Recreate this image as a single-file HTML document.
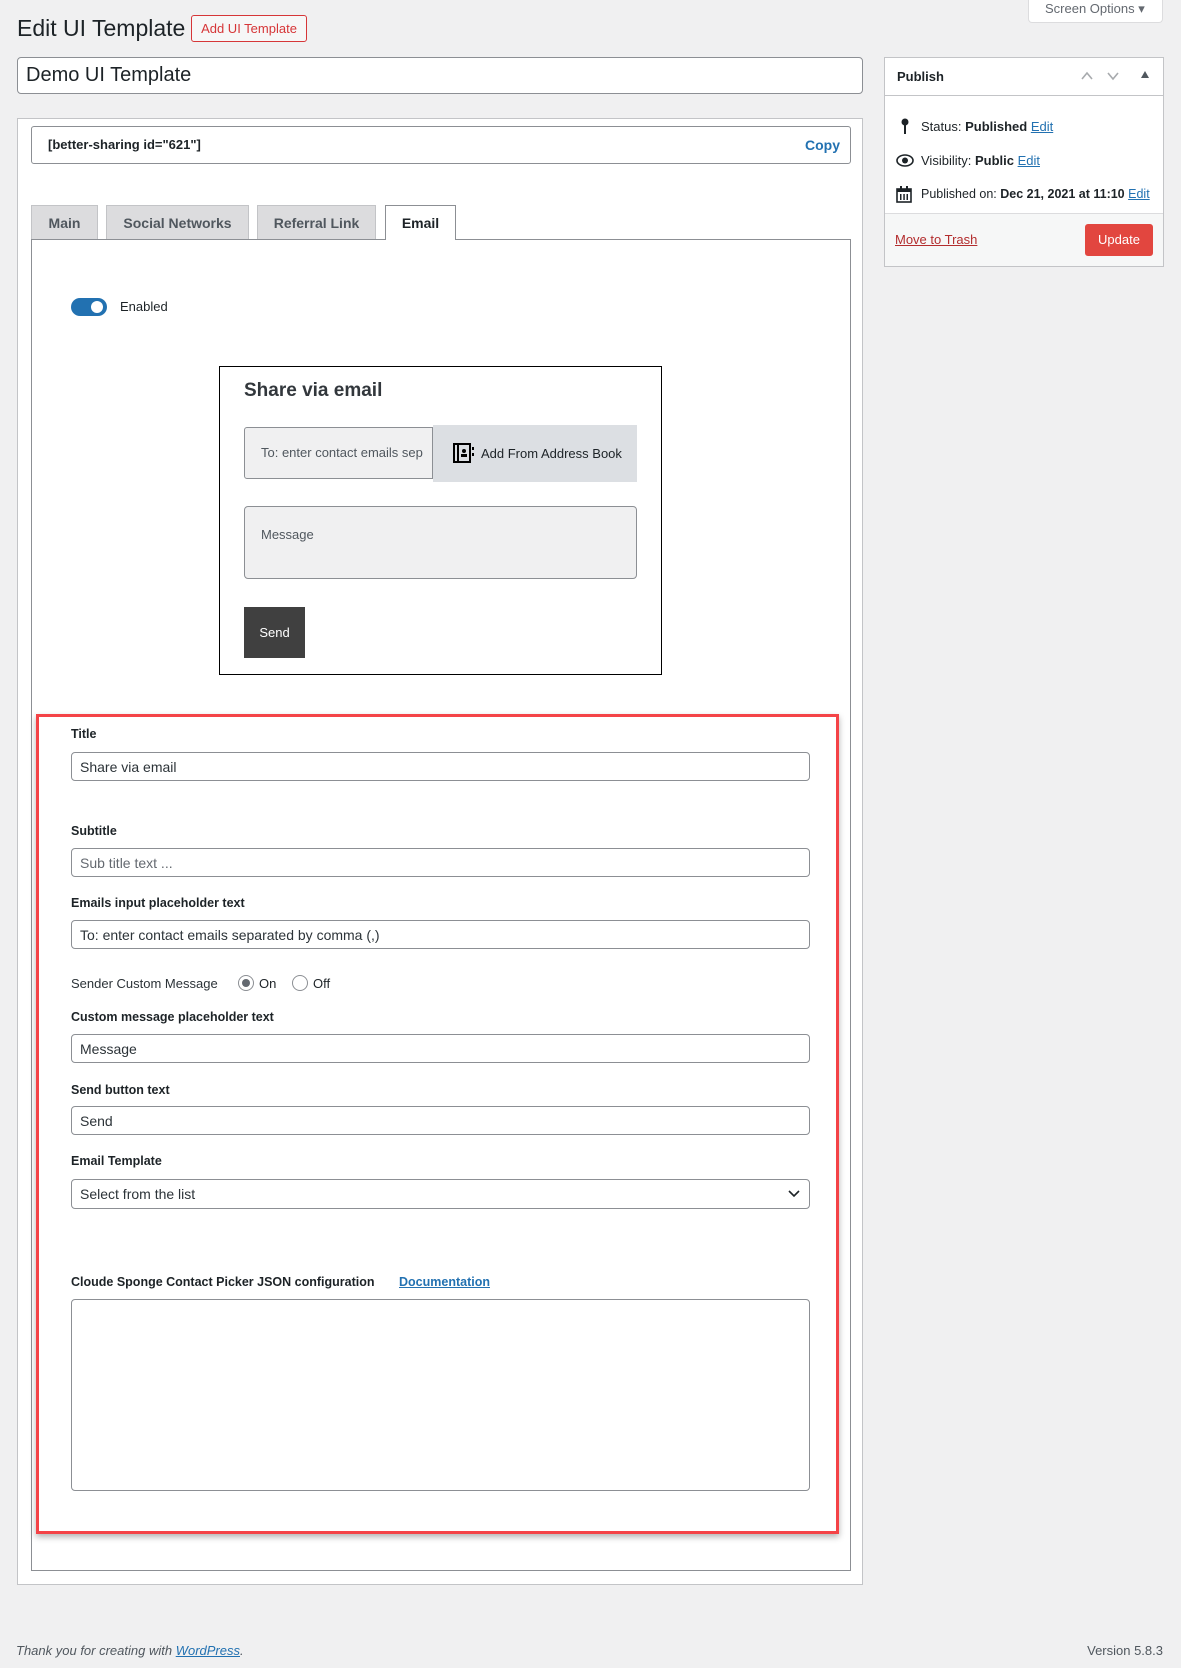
<!DOCTYPE html>
<html><head><meta charset="utf-8">
<style>
*{box-sizing:border-box;margin:0;padding:0}
body{width:1181px;height:1668px;background:#f0f0f1;font-family:"Liberation Sans",sans-serif;color:#1d2327;font-size:13px;position:relative;overflow:hidden}
.a{position:absolute}
.lbl{position:absolute;left:71px;font-weight:bold;font-size:12.5px;color:#1d2327}
.inp{position:absolute;left:71px;width:739px;height:29px;border:1px solid #8c8f94;border-radius:4px;background:#fff;font-size:14px;padding:6px 8px;color:#2c3338}
a{color:#2271b1;text-decoration:underline}
</style></head><body>
<div class="a" style="left:17px;top:15px;font-size:23px;">Edit UI Template</div>
<div class="a" style="left:191px;top:15px;width:116px;height:27px;border:1px solid #d63638;border-radius:3px;color:#d63638;font-size:13px;line-height:25px;text-align:center;background:#f6f7f7">Add UI Template</div>
<div class="a" style="left:1028px;top:-2px;width:135px;height:25px;border:1px solid #dcdcde;border-top:none;background:#fff;border-radius:0 0 4px 4px;font-size:13px;color:#646970;line-height:22px;padding-left:16px">Screen Options ▾</div>

<div class="a" style="left:17px;top:57px;width:846px;height:37px;border:1px solid #8c8f94;border-radius:4px;background:#fff;font-size:20px;padding:4px 8px;line-height:27px">Demo UI Template</div>

<div class="a" style="left:17px;top:118px;width:846px;height:1467px;border:1px solid #c3c4c7;background:#fff"></div>
<div class="a" style="left:31px;top:126px;width:820px;height:38px;border:1px solid #8c8f94;border-radius:3px;background:#fff;font-weight:bold;font-size:13px;line-height:36px;padding-left:16px">[better-sharing id="621"]<span style="position:absolute;right:10px;color:#2271b1;font-size:14px">Copy</span></div>

<div class="a" style="left:31px;top:239px;width:820px;height:1332px;border:1px solid #8c8f94;background:#fff"></div>
<div class="a" style="left:31px;top:205px;width:67px;height:34px;border:1px solid #c3c4c7;border-bottom:none;background:#dcdcde;font-weight:bold;font-size:14px;line-height:34px;text-align:center;color:#50575e">Main</div>
<div class="a" style="left:106px;top:205px;width:143px;height:34px;border:1px solid #c3c4c7;border-bottom:none;background:#dcdcde;font-weight:bold;font-size:14px;line-height:34px;text-align:center;color:#50575e">Social Networks</div>
<div class="a" style="left:257px;top:205px;width:119px;height:34px;border:1px solid #c3c4c7;border-bottom:none;background:#dcdcde;font-weight:bold;font-size:14px;line-height:34px;text-align:center;color:#50575e">Referral Link</div>
<div class="a" style="left:385px;top:205px;width:71px;height:35px;border:1px solid #8c8f94;border-bottom:none;background:#fff;font-weight:bold;font-size:14px;line-height:34px;text-align:center">Email</div>

<div class="a" style="left:71px;top:298px;width:36px;height:18px;border-radius:9px;background:#2271b1"></div>
<div class="a" style="left:91px;top:301px;width:12px;height:12px;border-radius:6px;background:#fff"></div>
<div class="a" style="left:120px;top:299px;font-size:13px">Enabled</div>

<div class="a" style="left:219px;top:366px;width:443px;height:309px;border:1px solid #000;background:#fff"></div>
<div class="a" style="left:244px;top:380px;font-size:19px;color:#32373c;font-weight:600">Share via email</div>
<div class="a" style="left:244px;top:427px;width:189px;height:52px;border:1px solid #8c8f94;border-radius:3px 0 0 3px;background:#f0f0f1;font-size:13px;color:#50575e;padding:17px 16px;white-space:nowrap;overflow:hidden">To: enter contact emails sep</div>
<div class="a" style="left:433px;top:425px;width:204px;height:57px;background:#dcdfe3;font-size:13px;color:#1d2327;line-height:57px;padding-left:48px">Add From Address Book</div>
<svg class="a" style="left:453px;top:443px" width="22" height="20" viewBox="0 0 22 20"><rect x="1" y="1" width="16" height="18" fill="none" stroke="#000" stroke-width="2"/><line x1="5" y1="1" x2="5" y2="19" stroke="#000" stroke-width="2"/><circle cx="11" cy="8" r="2" fill="#000"/><rect x="8" y="11" width="6" height="3" fill="#000"/><rect x="19" y="4" width="2" height="3" fill="#000"/><rect x="19" y="10" width="2" height="3" fill="#000"/></svg>
<div class="a" style="left:244px;top:506px;width:393px;height:73px;border:1px solid #8c8f94;border-radius:4px;background:#f0f0f1;font-size:13px;color:#50575e;padding:20px 16px">Message</div>
<div class="a" style="left:244px;top:607px;width:61px;height:51px;background:#404040;color:#fff;font-size:13px;line-height:51px;text-align:center">Send</div>

<div class="a" style="left:36px;top:714px;width:803px;height:820px;border:3px solid #f44347;box-shadow:0 3px 6px rgba(0,0,0,.3)"></div>
<div class="lbl" style="top:727px">Title</div>
<div class="inp" style="top:752px">Share via email</div>
<div class="lbl" style="top:824px">Subtitle</div>
<div class="inp" style="top:848px;color:#646970">Sub title text ...</div>
<div class="lbl" style="top:896px">Emails input placeholder text</div>
<div class="inp" style="top:920px">To: enter contact emails separated by comma (,)</div>
<div class="a" style="left:71px;top:976px;font-size:13px;color:#2c3338">Sender Custom Message</div>
<div class="a" style="left:238px;top:975px;width:16px;height:16px;border:1px solid #8c8f94;border-radius:50%;background:#fff"></div>
<div class="a" style="left:242px;top:979px;width:8px;height:8px;border-radius:50%;background:#646970"></div>
<div class="a" style="left:259px;top:976px;font-size:13px">On</div>
<div class="a" style="left:292px;top:975px;width:16px;height:16px;border:1px solid #8c8f94;border-radius:50%;background:#fff"></div>
<div class="a" style="left:313px;top:976px;font-size:13px">Off</div>
<div class="lbl" style="top:1010px">Custom message placeholder text</div>
<div class="inp" style="top:1034px">Message</div>
<div class="lbl" style="top:1083px">Send button text</div>
<div class="inp" style="top:1106px">Send</div>
<div class="lbl" style="top:1154px">Email Template</div>
<div class="inp" style="top:1179px;height:30px">Select from the list
<svg style="position:absolute;right:9px;top:10px" width="12" height="8" viewBox="0 0 12 8"><path d="M1 1l5 5 5-5" fill="none" stroke="#1d2327" stroke-width="1.6"/></svg></div>
<div class="lbl" style="top:1275px">Cloude Sponge Contact Picker JSON configuration</div>
<div class="a" style="left:399px;top:1275px;font-weight:bold;font-size:12.5px"><a>Documentation</a></div>
<div class="inp" style="top:1299px;height:192px"></div>

<div class="a" style="left:884px;top:57px;width:280px;height:210px;border:1px solid #c3c4c7;background:#fff"></div>
<div class="a" style="left:884px;top:95px;width:280px;height:1px;background:#c3c4c7"></div>
<div class="a" style="left:897px;top:69px;font-weight:bold;font-size:13px">Publish</div>
<svg class="a" style="left:1081px;top:71px" width="44" height="10" viewBox="0 0 44 10"><path d="M1 8l5-6 5 6" fill="none" stroke="#a7aaad" stroke-width="1.6"/><path d="M27 2l5 6 5-6" fill="none" stroke="#a7aaad" stroke-width="1.6"/></svg>
<svg class="a" style="left:1141px;top:71px" width="8" height="7" viewBox="0 0 8 7"><path d="M0 7L4 0 8 7z" fill="#50575e"/></svg>
<svg class="a" style="left:900px;top:118px" width="10" height="16" viewBox="0 0 10 16"><circle cx="5" cy="4" r="3.5" fill="#1d2327"/><rect x="4" y="6" width="2" height="10" fill="#1d2327"/></svg>
<div class="a" style="left:921px;top:119px">Status: <b style="font-weight:600">Published</b> <a>Edit</a></div>
<svg class="a" style="left:896px;top:154px" width="18" height="13" viewBox="0 0 18 13"><ellipse cx="9" cy="6.5" rx="8" ry="5.5" fill="none" stroke="#1d2327" stroke-width="1.6"/><circle cx="9" cy="6.5" r="3" fill="#1d2327"/></svg>
<div class="a" style="left:921px;top:153px">Visibility: <b style="font-weight:600">Public</b> <a>Edit</a></div>
<svg class="a" style="left:896px;top:186px" width="16" height="17" viewBox="0 0 16 17"><rect x="1" y="3" width="14" height="13" fill="none" stroke="#1d2327" stroke-width="1.6"/><rect x="1" y="3" width="14" height="3" fill="#1d2327"/><rect x="4" y="0" width="2" height="4" fill="#1d2327"/><rect x="10" y="0" width="2" height="4" fill="#1d2327"/><rect x="4" y="8" width="1.5" height="6" fill="#1d2327"/><rect x="7.3" y="8" width="1.5" height="6" fill="#1d2327"/><rect x="10.5" y="8" width="1.5" height="6" fill="#1d2327"/></svg>
<div class="a" style="left:921px;top:187px;font-size:12.5px">Published on: <b style="font-weight:600">Dec 21, 2021 at 11:10</b> <a>Edit</a></div>
<div class="a" style="left:885px;top:213px;width:278px;height:53px;background:#f6f7f7;border-top:1px solid #dcdcde"></div>
<div class="a" style="left:895px;top:232px;color:#b32d2e;text-decoration:underline">Move to Trash</div>
<div class="a" style="left:1085px;top:224px;width:68px;height:32px;background:#e2463f;border-radius:3px;color:#fff;font-size:13px;line-height:32px;text-align:center">Update</div>

<div class="a" style="left:16px;top:1643px;font-style:italic;font-size:13px;color:#50575e">Thank you for creating with <a>WordPress</a>.</div>
<div class="a" style="right:18px;top:1643px;font-size:13px;color:#50575e">Version 5.8.3</div>
</body></html>
